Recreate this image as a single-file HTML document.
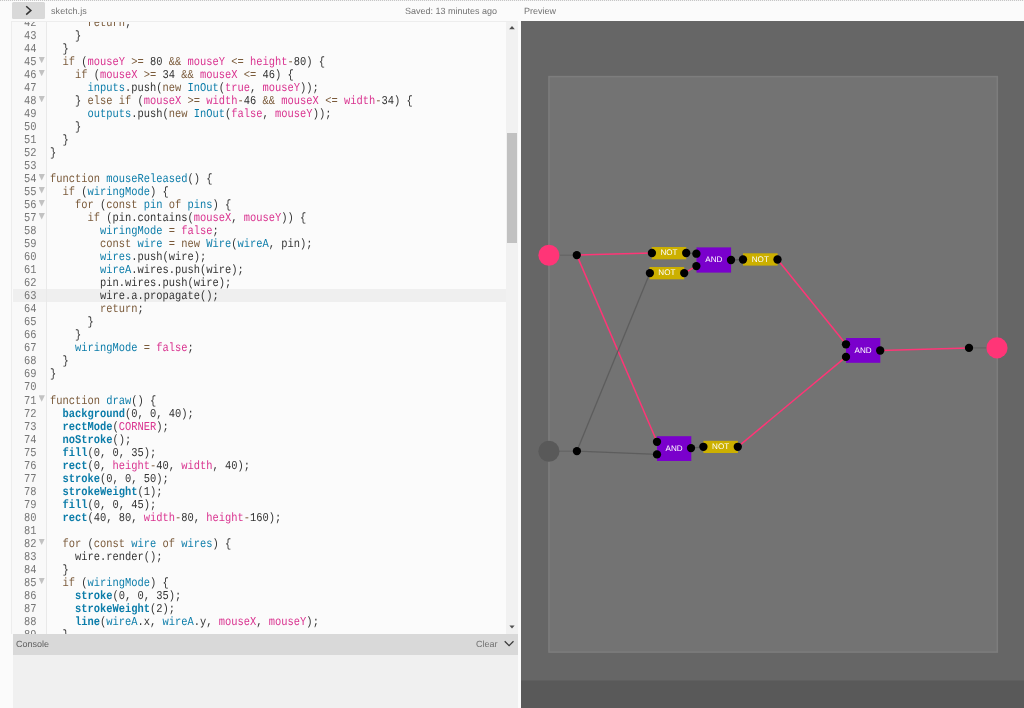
<!DOCTYPE html>
<html><head><meta charset="utf-8"><title>p5.js Web Editor</title>
<style>
html,body{margin:0;padding:0;}
body{width:1024px;height:708px;overflow:hidden;background:#fbfbfb;position:relative;font-family:"Liberation Sans",sans-serif;}
.abs{position:absolute;}
#topdash{left:0;top:0;width:1024px;height:1px;background:repeating-linear-gradient(90deg,#c6c6c6 0 1px,#f4f4f4 1px 2px);}
#toggle{left:12px;top:2px;width:33px;height:17px;background:#d9d9d9;border-radius:1.5px;}
.ui{will-change:transform;text-rendering:geometricPrecision;font-size:9px;color:#727272;white-space:nowrap;line-height:10px;letter-spacing:0px;}
#editor{left:11px;top:21px;width:507px;height:612.5px;border-left:1px solid #ededed;border-top:1px solid #ededed;box-sizing:border-box;overflow:hidden;background:#fbfbfb;}
#gutter{left:12px;top:22px;width:34px;height:611.5px;background:#f9f9f9;}
#gline{left:46px;top:22px;width:1px;height:611.5px;background:#e9e9e9;}
#code{left:12px;top:22px;width:494px;height:611.5px;overflow:hidden;}
#code .wrap{will-change:transform;position:absolute;left:0;top:-22px;width:494px;}
.ln{position:absolute;left:0;width:494px;height:13.02px;line-height:13.02px;font-family:"Liberation Mono",monospace;font-size:12px;text-rendering:geometricPrecision;color:#333;white-space:pre;}
.ln.act{background:linear-gradient(90deg,#fbfbfb 0 1px,#efefef 1px);}
.ln .n{position:absolute;top:1.24px;left:0;width:28.2px;transform:scaleX(0.868);transform-origin:0 0;text-align:right;color:#767676;font-weight:normal;}
.ln .c{position:absolute;top:1.24px;left:38px;transform:scaleX(0.8681);transform-origin:0 0;}
.ln .fd{position:absolute;left:26.5px;top:2.0px;width:6.4px;height:6.6px;background:#c2c2c2;clip-path:polygon(0 0,100% 0,50% 100%);}
.k{color:#7A5A3A;} .v{color:#0B7CA9;} .p{color:#D9328F;} .a{color:#D9328F;} .f{color:#0B7CA9;font-weight:bold;}
#sbtrack{left:506px;top:22px;width:12px;height:611.5px;background:#f1f1f1;}
#sbthumb{left:507px;top:133px;width:10px;height:110px;background:#c1c1c1;}
#conhead{left:13px;top:633.5px;width:505px;height:21.5px;background:#d9d9d9;}
#conbody{left:13px;top:655px;width:505px;height:53px;background:#f0f0f0;}
</style></head>
<body>
<div id="topdash" class="abs"></div>
<div id="toggle" class="abs"><svg width="33" height="17" viewBox="0 0 33 17"><path d="M14.2 4.3 L18.9 8.4 L14.2 12.6" fill="none" stroke="#333" stroke-width="1.5"/></svg></div>
<div class="abs ui" style="left:50.9px;top:5.5px;letter-spacing:0.1px;">sketch.js</div>
<div class="abs ui" style="right:527px;top:5.5px;">Saved: 13 minutes ago</div>
<div class="abs ui" style="left:524px;top:5.5px;">Preview</div>
<div id="editor" class="abs"></div>
<div id="gutter" class="abs"></div>
<div id="code" class="abs"><div class="wrap">
<div class="ln" style="top:15.70px"><b class="n">42</b><span class="c">      <span class="k">return</span>;</span></div>
<div class="ln" style="top:28.72px"><b class="n">43</b><span class="c">    }</span></div>
<div class="ln" style="top:41.74px"><b class="n">44</b><span class="c">  }</span></div>
<div class="ln" style="top:54.76px"><b class="n">45</b><i class="fd"></i><span class="c">  <span class="k">if</span> (<span class="p">mouseY</span> <span class="k">&gt;=</span> 80 <span class="k">&amp;&amp;</span> <span class="p">mouseY</span> <span class="k">&lt;=</span> <span class="p">height</span><span class="k">-</span>80) {</span></div>
<div class="ln" style="top:67.78px"><b class="n">46</b><i class="fd"></i><span class="c">    <span class="k">if</span> (<span class="p">mouseX</span> <span class="k">&gt;=</span> 34 <span class="k">&amp;&amp;</span> <span class="p">mouseX</span> <span class="k">&lt;=</span> 46) {</span></div>
<div class="ln" style="top:80.80px"><b class="n">47</b><span class="c">      <span class="v">inputs</span>.push(<span class="k">new</span> <span class="v">InOut</span>(<span class="a">true</span>, <span class="p">mouseY</span>));</span></div>
<div class="ln" style="top:93.82px"><b class="n">48</b><i class="fd"></i><span class="c">    } <span class="k">else</span> <span class="k">if</span> (<span class="p">mouseX</span> <span class="k">&gt;=</span> <span class="p">width</span><span class="k">-</span>46 <span class="k">&amp;&amp;</span> <span class="p">mouseX</span> <span class="k">&lt;=</span> <span class="p">width</span><span class="k">-</span>34) {</span></div>
<div class="ln" style="top:106.84px"><b class="n">49</b><span class="c">      <span class="v">outputs</span>.push(<span class="k">new</span> <span class="v">InOut</span>(<span class="a">false</span>, <span class="p">mouseY</span>));</span></div>
<div class="ln" style="top:119.86px"><b class="n">50</b><span class="c">    }</span></div>
<div class="ln" style="top:132.88px"><b class="n">51</b><span class="c">  }</span></div>
<div class="ln" style="top:145.90px"><b class="n">52</b><span class="c">}</span></div>
<div class="ln" style="top:158.92px"><b class="n">53</b><span class="c"></span></div>
<div class="ln" style="top:171.94px"><b class="n">54</b><i class="fd"></i><span class="c"><span class="k">function</span> <span class="v">mouseReleased</span>() {</span></div>
<div class="ln" style="top:184.96px"><b class="n">55</b><i class="fd"></i><span class="c">  <span class="k">if</span> (<span class="v">wiringMode</span>) {</span></div>
<div class="ln" style="top:197.98px"><b class="n">56</b><i class="fd"></i><span class="c">    <span class="k">for</span> (<span class="k">const</span> <span class="v">pin</span> <span class="k">of</span> <span class="v">pins</span>) {</span></div>
<div class="ln" style="top:211.00px"><b class="n">57</b><i class="fd"></i><span class="c">      <span class="k">if</span> (pin.contains(<span class="p">mouseX</span>, <span class="p">mouseY</span>)) {</span></div>
<div class="ln" style="top:224.02px"><b class="n">58</b><span class="c">        <span class="v">wiringMode</span> <span class="k">=</span> <span class="a">false</span>;</span></div>
<div class="ln" style="top:237.04px"><b class="n">59</b><span class="c">        <span class="k">const</span> <span class="v">wire</span> <span class="k">=</span> <span class="k">new</span> <span class="v">Wire</span>(<span class="v">wireA</span>, pin);</span></div>
<div class="ln" style="top:250.06px"><b class="n">60</b><span class="c">        <span class="v">wires</span>.push(wire);</span></div>
<div class="ln" style="top:263.08px"><b class="n">61</b><span class="c">        <span class="v">wireA</span>.wires.push(wire);</span></div>
<div class="ln" style="top:276.10px"><b class="n">62</b><span class="c">        pin.wires.push(wire);</span></div>
<div class="ln act" style="top:289.12px"><b class="n">63</b><span class="c">        wire.a.propagate();</span></div>
<div class="ln" style="top:302.14px"><b class="n">64</b><span class="c">        <span class="k">return</span>;</span></div>
<div class="ln" style="top:315.16px"><b class="n">65</b><span class="c">      }</span></div>
<div class="ln" style="top:328.18px"><b class="n">66</b><span class="c">    }</span></div>
<div class="ln" style="top:341.20px"><b class="n">67</b><span class="c">    <span class="v">wiringMode</span> <span class="k">=</span> <span class="a">false</span>;</span></div>
<div class="ln" style="top:354.22px"><b class="n">68</b><span class="c">  }</span></div>
<div class="ln" style="top:367.24px"><b class="n">69</b><span class="c">}</span></div>
<div class="ln" style="top:380.26px"><b class="n">70</b><span class="c"></span></div>
<div class="ln" style="top:393.28px"><b class="n">71</b><i class="fd"></i><span class="c"><span class="k">function</span> <span class="v">draw</span>() {</span></div>
<div class="ln" style="top:406.30px"><b class="n">72</b><span class="c">  <span class="f">background</span>(0, 0, 40);</span></div>
<div class="ln" style="top:419.32px"><b class="n">73</b><span class="c">  <span class="f">rectMode</span>(<span class="p">CORNER</span>);</span></div>
<div class="ln" style="top:432.34px"><b class="n">74</b><span class="c">  <span class="f">noStroke</span>();</span></div>
<div class="ln" style="top:445.36px"><b class="n">75</b><span class="c">  <span class="f">fill</span>(0, 0, 35);</span></div>
<div class="ln" style="top:458.38px"><b class="n">76</b><span class="c">  <span class="f">rect</span>(0, <span class="p">height</span><span class="k">-</span>40, <span class="p">width</span>, 40);</span></div>
<div class="ln" style="top:471.40px"><b class="n">77</b><span class="c">  <span class="f">stroke</span>(0, 0, 50);</span></div>
<div class="ln" style="top:484.42px"><b class="n">78</b><span class="c">  <span class="f">strokeWeight</span>(1);</span></div>
<div class="ln" style="top:497.44px"><b class="n">79</b><span class="c">  <span class="f">fill</span>(0, 0, 45);</span></div>
<div class="ln" style="top:510.46px"><b class="n">80</b><span class="c">  <span class="f">rect</span>(40, 80, <span class="p">width</span><span class="k">-</span>80, <span class="p">height</span><span class="k">-</span>160);</span></div>
<div class="ln" style="top:523.48px"><b class="n">81</b><span class="c"></span></div>
<div class="ln" style="top:536.50px"><b class="n">82</b><i class="fd"></i><span class="c">  <span class="k">for</span> (<span class="k">const</span> <span class="v">wire</span> <span class="k">of</span> <span class="v">wires</span>) {</span></div>
<div class="ln" style="top:549.52px"><b class="n">83</b><span class="c">    wire.render();</span></div>
<div class="ln" style="top:562.54px"><b class="n">84</b><span class="c">  }</span></div>
<div class="ln" style="top:575.56px"><b class="n">85</b><i class="fd"></i><span class="c">  <span class="k">if</span> (<span class="v">wiringMode</span>) {</span></div>
<div class="ln" style="top:588.58px"><b class="n">86</b><span class="c">    <span class="f">stroke</span>(0, 0, 35);</span></div>
<div class="ln" style="top:601.60px"><b class="n">87</b><span class="c">    <span class="f">strokeWeight</span>(2);</span></div>
<div class="ln" style="top:614.62px"><b class="n">88</b><span class="c">    <span class="f">line</span>(<span class="v">wireA</span>.x, <span class="v">wireA</span>.y, <span class="p">mouseX</span>, <span class="p">mouseY</span>);</span></div>
<div class="ln" style="top:627.64px"><b class="n">89</b><span class="c">  }</span></div>
</div></div>
<div id="gline" class="abs"></div>
<div id="sbtrack" class="abs"></div>
<div id="sbthumb" class="abs"></div>
<svg class="abs" style="left:506px;top:22px" width="12" height="612" viewBox="0 0 12 612"><path d="M3.2 7.3 L8.8 7.3 L6 4.0 Z" fill="#505050"/><path d="M3.4 603.4 L8.6 603.4 L6 606.4 Z" fill="#505050"/></svg>
<div id="conhead" class="abs"></div>
<div id="conbody" class="abs"></div>
<div class="abs ui" style="left:15.5px;top:639px;color:#5e5e5e;">Console</div>
<div class="abs ui" style="left:476px;top:639px;">Clear</div>
<svg class="abs" style="left:502px;top:638px" width="14" height="10" viewBox="0 0 14 10"><path d="M2.7 3.3 L7.1 7.7 L11.5 3.3" fill="none" stroke="#3a3a3a" stroke-width="1.25"/></svg>
<svg class="abs" style="will-change:transform;left:0;top:0;font-family:'Liberation Sans',sans-serif;text-rendering:geometricPrecision" width="1024" height="708" viewBox="0 0 1024 708">
<rect x="521" y="21" width="503" height="687" fill="#666"/>
<rect x="521" y="680.5" width="503" height="27.5" fill="#595959"/>
<rect x="548.95" y="76.6" width="448.35" height="575.5" fill="#737373" stroke="#7d7d7d" stroke-width="1.5"/>
<line x1="549" y1="255.2" x2="577" y2="255.2" stroke="#656565" stroke-width="1.25"/>
<line x1="549" y1="451.2" x2="577" y2="451.2" stroke="#656565" stroke-width="1.25"/>
<line x1="969" y1="347.9" x2="997" y2="347.9" stroke="#656565" stroke-width="1.25"/>
<line x1="576.8" y1="255.1" x2="651.9" y2="253.0" stroke="#ff3577" stroke-width="1.5"/>
<line x1="576.8" y1="255.1" x2="657" y2="441.8" stroke="#ff3577" stroke-width="1.5"/>
<line x1="576.9" y1="451.1" x2="649.9" y2="273.1" stroke="#5d5d5d" stroke-width="1.3"/>
<line x1="576.9" y1="451.1" x2="657" y2="454.4" stroke="#5d5d5d" stroke-width="1.3"/>
<line x1="686.2" y1="253.0" x2="696.4" y2="253.7" stroke="#5d5d5d" stroke-width="1.3"/>
<line x1="684.2" y1="273.1" x2="696.4" y2="266.1" stroke="#ff3577" stroke-width="1.5"/>
<line x1="731.0" y1="260.0" x2="743" y2="259.5" stroke="#5d5d5d" stroke-width="1.3"/>
<line x1="777.5" y1="259.5" x2="846" y2="344.3" stroke="#ff3577" stroke-width="1.5"/>
<line x1="691" y1="448.1" x2="703.4" y2="446.8" stroke="#5d5d5d" stroke-width="1.3"/>
<line x1="737.8" y1="446.8" x2="846" y2="356.9" stroke="#ff3577" stroke-width="1.5"/>
<line x1="880.2" y1="350.5" x2="969" y2="347.9" stroke="#ff3577" stroke-width="1.5"/>
<rect x="651.7" y="247" width="34.6" height="12.3" fill="#ccb000"/><text x="669.0" y="255.45" font-size="8.1" fill="#fff" text-anchor="middle">NOT</text>
<rect x="649.5" y="267" width="34.7" height="12.3" fill="#ccb000"/><text x="666.85" y="275.45" font-size="8.1" fill="#fff" text-anchor="middle">NOT</text>
<rect x="743" y="253.3" width="34.6" height="12.3" fill="#ccb000"/><text x="760.3" y="261.75" font-size="8.1" fill="#fff" text-anchor="middle">NOT</text>
<rect x="703.4" y="440.8" width="34.5" height="12.2" fill="#ccb000"/><text x="720.65" y="449.20" font-size="8.1" fill="#fff" text-anchor="middle">NOT</text>
<rect x="696.5" y="247.4" width="34.6" height="25.2" fill="#7a00cc"/><text x="713.8" y="262.30" font-size="8.1" fill="#fff" text-anchor="middle">AND</text>
<rect x="657" y="436.2" width="34.3" height="24.8" fill="#7a00cc"/><text x="674.15" y="450.90" font-size="8.1" fill="#fff" text-anchor="middle">AND</text>
<rect x="846" y="338" width="34.3" height="24.8" fill="#7a00cc"/><text x="863.15" y="352.70" font-size="8.1" fill="#fff" text-anchor="middle">AND</text>
<circle cx="548.9" cy="255.3" r="10.55" fill="#ff3577"/>
<circle cx="548.9" cy="451.2" r="10.55" fill="#595959"/>
<circle cx="997" cy="347.9" r="10.55" fill="#ff3577"/>
<circle cx="576.8" cy="255.1" r="4.15" fill="#000"/>
<circle cx="576.9" cy="451.1" r="4.15" fill="#000"/>
<circle cx="651.9" cy="253.0" r="4.15" fill="#000"/>
<circle cx="686.2" cy="253.0" r="4.15" fill="#000"/>
<circle cx="649.9" cy="273.1" r="4.15" fill="#000"/>
<circle cx="684.2" cy="273.1" r="4.15" fill="#000"/>
<circle cx="696.4" cy="253.7" r="4.15" fill="#000"/>
<circle cx="696.4" cy="266.1" r="4.15" fill="#000"/>
<circle cx="731.0" cy="260.0" r="4.15" fill="#000"/>
<circle cx="743" cy="259.5" r="4.15" fill="#000"/>
<circle cx="777.5" cy="259.5" r="4.15" fill="#000"/>
<circle cx="657" cy="441.8" r="4.15" fill="#000"/>
<circle cx="657" cy="454.4" r="4.15" fill="#000"/>
<circle cx="691" cy="448.1" r="4.15" fill="#000"/>
<circle cx="703.4" cy="446.8" r="4.15" fill="#000"/>
<circle cx="737.8" cy="446.8" r="4.15" fill="#000"/>
<circle cx="846" cy="344.3" r="4.15" fill="#000"/>
<circle cx="846" cy="356.9" r="4.15" fill="#000"/>
<circle cx="880.2" cy="350.5" r="4.15" fill="#000"/>
<circle cx="969" cy="347.9" r="4.15" fill="#000"/>
</svg>
</body></html>
